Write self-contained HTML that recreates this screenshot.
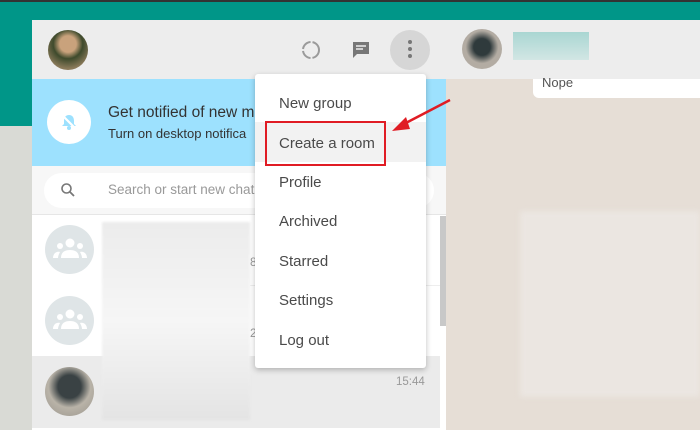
<!DOCTYPE html>
<html><head><style>
*{margin:0;padding:0;box-sizing:border-box}
body{width:700px;height:430px;overflow:hidden;background:#d9dad5;font-family:"Liberation Sans",sans-serif;position:relative}
.a{position:absolute}
.menu div{position:absolute;left:24px;font-size:15px;color:#4a4a4a}
</style></head><body>
<div class="a" style="left:0;top:0;width:700px;height:2px;background:#333"></div>
<div class="a" style="left:0;top:2px;width:700px;height:124px;background:#009688"></div>
<div class="a" style="left:32px;top:20px;width:414px;height:410px;background:#fff"></div>
<div class="a" style="left:32px;top:20px;width:414px;height:59px;background:#ededed"></div>
<div class="a" style="left:48px;top:30px;width:40px;height:40px;border-radius:50%;background:radial-gradient(circle at 50% 35%,#c9a27c 0 25%,#3e4a2c 45%,#8a7a5a 75%)"></div>
<svg class="a" style="left:300px;top:39px" width="22" height="22" viewBox="0 0 22 22"><circle cx="11" cy="11" r="8" fill="none" stroke="#9a9a9a" stroke-width="2" stroke-dasharray="11 2"/></svg>
<svg class="a" style="left:351px;top:40px" width="20" height="20" viewBox="0 0 20 20"><path d="M2 2h16v12H6l-4 4z" fill="#777"/><path d="M5 6h10M5 9h7" stroke="#ededed" stroke-width="1.5"/></svg>
<div class="a" style="left:390px;top:30px;width:40px;height:40px;border-radius:50%;background:#d6d6d6"></div>
<div class="a" style="left:408px;top:40px;width:4px;height:4px;border-radius:50%;background:#777;box-shadow:0 7px 0 #777,0 14px 0 #777"></div>
<div class="a" style="left:32px;top:79px;width:414px;height:87px;background:#9de1fe"></div>
<div class="a" style="left:47px;top:100px;width:44px;height:44px;border-radius:50%;background:#fff"></div>
<svg class="a" style="left:59px;top:112px" width="20" height="20" viewBox="0 0 20 20"><path d="M10 3c3.5 0 5 2.5 5 6v3l2 2H3l2-2V9c0-3.5 1.5-6 5-6z" fill="#9de1fe"/><circle cx="10" cy="16" r="2" fill="#9de1fe"/><path d="M3 3l14 14" stroke="#fff" stroke-width="2.2"/></svg>
<div class="a" style="left:108px;top:104px;font-size:15.5px;color:#333">Get notified of new m</div>
<div class="a" style="left:108px;top:126px;font-size:13px;color:#333">Turn on desktop notifica</div>
<div class="a" style="left:32px;top:166px;width:414px;height:49px;background:#f7f7f7;border-bottom:1px solid #e6e6e6"></div>
<div class="a" style="left:44px;top:173px;width:390px;height:35px;border-radius:18px;background:#fff"></div>
<svg class="a" style="left:60px;top:182px" width="16" height="16" viewBox="0 0 16 16"><circle cx="6.5" cy="6.5" r="4.5" fill="none" stroke="#777" stroke-width="1.6"/><path d="M10 10l4 4" stroke="#777" stroke-width="1.8"/></svg>
<div class="a" style="left:108px;top:182px;font-size:13.5px;color:#999">Search or start new chat</div>
<div class="a" style="left:440px;top:216px;width:6px;height:110px;background:#c8c8c8"></div>
<div class="a" style="left:45px;top:225px;width:49px;height:49px;border-radius:50%;background:#dfe5e7"></div>
<div class="a" style="left:45px;top:296px;width:49px;height:49px;border-radius:50%;background:#dfe5e7"></div>
<svg class="a" style="left:53px;top:238px" width="34" height="22" viewBox="0 0 34 22"><g fill="#fff"><circle cx="17" cy="5" r="4.5"/><circle cx="7" cy="8" r="3"/><circle cx="27" cy="8" r="3"/><path d="M8 20c0-6 4-8 9-8s9 2 9 8z"/><path d="M0 20c0-4 3-7 7-6-1 2-2 4-2 6z"/><path d="M34 20c0-4-3-7-7-6 1 2 2 4 2 6z"/></g></svg>
<svg class="a" style="left:53px;top:309px" width="34" height="22" viewBox="0 0 34 22"><g fill="#fff"><circle cx="17" cy="5" r="4.5"/><circle cx="7" cy="8" r="3"/><circle cx="27" cy="8" r="3"/><path d="M8 20c0-6 4-8 9-8s9 2 9 8z"/><path d="M0 20c0-4 3-7 7-6-1 2-2 4-2 6z"/><path d="M34 20c0-4-3-7-7-6 1 2 2 4 2 6z"/></g></svg>
<div class="a" style="left:250px;top:285px;width:190px;height:1px;background:#eee"></div>
<div class="a" style="left:32px;top:356px;width:408px;height:72px;background:#ebebeb"></div>
<div class="a" style="left:45px;top:367px;width:49px;height:49px;border-radius:50%;background:radial-gradient(circle at 50% 40%,#3a4244 0 30%,#b9b3a8 55%,#9a958c)"></div>
<div class="a" style="left:102px;top:222px;width:148px;height:198px;background:linear-gradient(180deg,#ececec,#f6f6f6 50%,#e4e4e4);filter:blur(1px)"></div>
<div class="a" style="left:396px;top:376px;font-size:11.5px;color:#999">15:44</div>
<div class="a" style="left:250px;top:255px;font-size:12px;color:#999">8</div>
<div class="a" style="left:250px;top:326px;font-size:12px;color:#999">2</div>
<div class="a" style="left:446px;top:20px;width:254px;height:410px;background:#e6ded6"></div>
<div class="a" style="left:446px;top:20px;width:254px;height:59px;background:#ededed"></div>
<div class="a" style="left:462px;top:29px;width:40px;height:40px;border-radius:50%;background:radial-gradient(circle at 50% 45%,#2f3a3c 0 28%,#b3aca3 55%)"></div>
<div class="a" style="left:513px;top:32px;width:76px;height:28px;background:linear-gradient(#a9d6d2,#d2e6e4)"></div>
<div class="a" style="left:533px;top:79px;width:167px;height:19px;background:#fff;border-radius:0 0 0 6px"></div>
<div class="a" style="left:542px;top:75px;font-size:13px;color:#555">Nope</div>
<div class="a" style="left:520px;top:211px;width:180px;height:186px;background:#ebe6e1;filter:blur(3px)"></div>
<div class="a menu" style="left:255px;top:74px;width:171px;height:294px;background:#fff;border-radius:3px;box-shadow:0 2px 6px rgba(0,0,0,.25)">
<div class="a" style="left:0;top:48px;width:171px;height:40px;background:#f2f2f2"></div>
<div style="top:21px">New group</div>
<div style="top:61px">Create a room</div>
<div style="top:100px">Profile</div>
<div style="top:139px">Archived</div>
<div style="top:179px">Starred</div>
<div style="top:218px">Settings</div>
<div style="top:258px">Log out</div>
</div>
<div class="a" style="left:265px;top:121px;width:121px;height:45px;border:2px solid #e01c24"></div>
<svg class="a" style="left:388px;top:95px" width="70" height="45" viewBox="0 0 70 45"><path d="M62 5L14 30" stroke="#e01c24" stroke-width="2.5"/><path d="M4 36l14-14 4 12z" fill="#e01c24"/></svg>
</body></html>
